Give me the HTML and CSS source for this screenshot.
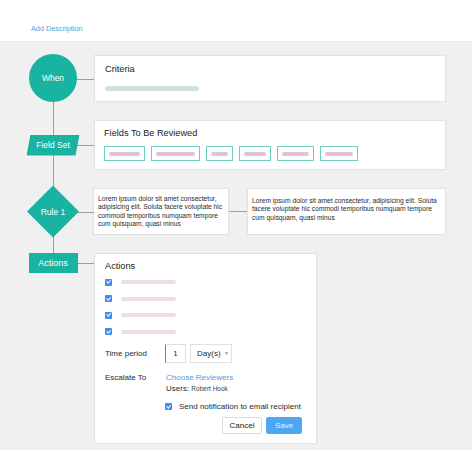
FILE: index.html
```html
<!doctype html>
<html>
<head>
<meta charset="utf-8">
<title>Workflow rule</title>
<link rel="stylesheet" href="styles.css">
</head>
<body>

  <div class="top">
    <a class="add-desc">Add Description</a>
  </div>

  <div class="canvas">
    <div class="flow">

      <div class="row">
        <div class="node"><div class="shape circle">When</div></div>
        <div class="card criteria">
          <div class="card-title">Criteria</div>
          <div class="bar grey"></div>
        </div>
      </div>

      <div class="row">
        <div class="node"><div class="shape para">Field Set</div></div>
        <div class="card fields">
          <div class="card-title">Fields To Be Reviewed</div>
          <div class="chips">
            <div class="chip" style="width:41px"><span></span></div>
            <div class="chip" style="width:49px"><span></span></div>
            <div class="chip" style="width:27px"><span></span></div>
            <div class="chip" style="width:32px"><span></span></div>
            <div class="chip" style="width:37px"><span></span></div>
            <div class="chip" style="width:38px"><span></span></div>
          </div>
        </div>
      </div>

      <div class="row">
        <div class="node"><div class="shape diamond">Rule 1</div></div>
        <div class="rule-boxes">
          <div class="card note narrow">Lorem ipsum dolor sit amet consectetur, adipisicing elit. Soluta facere voluptate hic commodi temporibus numquam tempore cum quisquam, quasi minus</div>
          <div class="link"></div>
          <div class="card note wide">Lorem ipsum dolor sit amet consectetur, adipisicing elit. Soluta facere voluptate hic commodi temporibus numquam tempore cum quisquam, quasi minus</div>
        </div>
      </div>

      <div class="row last">
        <div class="node"><div class="shape rect">Actions</div></div>
        <div class="card actions">
          <div class="card-title">Actions</div>
          <div class="check-row"><span class="check"></span><span class="bar pink"></span></div>
          <div class="check-row"><span class="check"></span><span class="bar pink"></span></div>
          <div class="check-row"><span class="check"></span><span class="bar pink"></span></div>
          <div class="check-row"><span class="check"></span><span class="bar pink"></span></div>

          <div class="field period">
            <div class="label">Time period</div>
            <div class="controls inline">
              <div class="input num">1</div>
              <div class="input select">Day(s) <span class="caret">&#9662;</span></div>
            </div>
          </div>

          <div class="field escalate">
            <div class="label">Escalate To</div>
            <div class="controls">
              <a class="link-text">Choose Reviewers</a>
              <div class="users">Users: <small>Robert Hook</small></div>
            </div>
          </div>

          <div class="field notify">
            <div class="label"></div>
            <div class="controls inline">
              <span class="check"></span>
              <span class="nowrap">Send notification to email recipient</span>
            </div>
          </div>

          <div class="buttons">
            <button class="btn">Cancel</button>
            <button class="btn primary">Save</button>
          </div>
        </div>
      </div>

    </div>
  </div>

</body>
</html>
```

FILE: styles.css
```css
html, body { margin:0; padding:0; background:#fff; }

body {
  font-family: "Liberation Sans", Arial, sans-serif;
  color:#2a2a2a;
  width:474px;
}

.top {
  height:41px;
  box-sizing:border-box;
  padding:17px 0 0 31px;
}

.add-desc {
  font-size:7.3px;
  line-height:10px;
  color:#4aa3df;
}

.canvas {
  width:472px;
  height:409px;
  box-sizing:border-box;
  background:#f0f0f0;
  border-top:1px solid #ebebeb;
  padding-top:13px;
}

.flow {
  position:relative;
  width:446px;
  display:flex;
  flex-direction:column;
  gap:18px;
}

/* the spine joining the nodes */
.flow::before {
  content:"";
  position:absolute;
  left:53px;
  top:23px;
  height:175px;
  width:1px;
  background:#9d9d9d;
}

.row {
  display:flex;
  align-items:center;
}

.row.last { align-items:flex-start; }

.node {
  position:relative;
  flex:none;
  width:94px;
  align-self:stretch;
  display:flex;
  align-items:center;
  justify-content:center;
  padding-left:12px;
  box-sizing:border-box;
}

.row.last .node {
  align-self:flex-start;
  height:20px;
}

.node::before {
  content:"";
  position:absolute;
  left:53px;
  right:0;
  top:50%;
  height:1px;
  background:#9d9d9d;
}

.shape {
  position:relative;
  z-index:1;
  display:flex;
  align-items:center;
  justify-content:center;
  background:#18b3a1;
  color:#fff;
  font-size:8.5px;
}

.circle {
  width:48px;
  height:48px;
  margin:-1px 0 0;
  border-radius:50%;
}

.para {
  width:53px;
  height:21px;
  clip-path:polygon(4px 0, 100% 0, calc(100% - 4px) 100%, 0 100%);
}

.diamond {
  width:52px;
  height:52px;
  margin:-3px 0;
  clip-path:polygon(50% 0, 100% 50%, 50% 100%, 0 50%);
}

.rect {
  width:49px;
  height:20px;
  font-size:9px;
}

.card {
  background:#fff;
  border:1px solid #e2e2e2;
  box-shadow:0 0 1px rgba(0,0,0,.05);
  box-sizing:border-box;
}

.criteria, .fields { flex:1; }

.card-title {
  font-size:9.2px;
  line-height:12px;
  color:#222;
}

.criteria { padding:7px 10px 10px; }

.bar {
  display:block;
  height:5px;
  border-radius:3px;
}

.bar.grey {
  width:94px;
  margin-top:11px;
  background:#cfe1df;
}

.fields { padding:6px 9px 8px; }

.chips {
  display:flex;
  gap:6px;
  margin-top:7px;
}

.chip {
  height:15px;
  box-sizing:border-box;
  border:1.5px solid #6ed0c2;
  display:flex;
  align-items:center;
  padding:0 4px;
}

.chip span {
  flex:1;
  height:4px;
  border-radius:2px;
  background:#dfc5d1;
}

.rule-boxes {
  flex:1;
  display:flex;
  align-items:stretch;
  margin-left:-1px;
}

.rule-boxes .link {
  width:18px;
  height:1px;
  align-self:center;
  background:#9d9d9d;
}

.note {
  height:47px;
  padding:6px 4px 0;
  font-size:6.7px;
  line-height:8.4px;
}

.note.narrow { width:136px; flex:none; }
.note.wide { flex:1; padding-top:8px; }

.actions {
  width:223px;
  padding:6px 14px 9px 10px;
}

.actions .card-title { margin-bottom:2px; }

.check-row {
  height:16.5px;
  display:flex;
  align-items:center;
  gap:9px;
}

.check {
  position:relative;
  flex:none;
  width:7px;
  height:7px;
  border-radius:1px;
  background:#3f8fe2;
}

.check::after {
  content:"";
  position:absolute;
  left:2.3px;
  top:0.6px;
  width:1.6px;
  height:3.4px;
  border:solid #fff;
  border-width:0 1px 1px 0;
  transform:rotate(40deg);
}

.bar.pink {
  width:55px;
  height:4px;
  background:#ebdfdf;
}

.field {
  display:grid;
  grid-template-columns:60px 1fr;
  font-size:8px;
  line-height:11px;
}

.period { margin-top:4px; align-items:center; }
.escalate { margin-top:9px; }
.notify { margin-top:7px; }

.controls.inline {
  display:flex;
  align-items:center;
  gap:4px;
}

.notify .controls.inline { gap:7px; }

.nowrap { white-space:nowrap; }

.input {
  height:19px;
  box-sizing:border-box;
  border:1px solid #e0e0e0;
  display:flex;
  align-items:center;
  font-size:8px;
  background:#fff;
}

.input.num {
  width:21px;
  justify-content:center;
  border-left:1.5px solid #e0555a;
}

.input.select {
  width:42px;
  padding-left:6px;
  gap:4px;
}

.caret {
  font-size:6px;
  color:#999;
}

.escalate .controls { padding-left:1px; }

.link-text {
  display:block;
  color:#4a9fe0;
}

.users small {
  font-size:6.5px;
  color:#444;
}

.buttons {
  display:flex;
  justify-content:flex-end;
  gap:4px;
  margin-top:5px;
}

.btn {
  height:17px;
  padding:0;
  font:8px "Liberation Sans", Arial, sans-serif;
  border:1px solid #dcdcdc;
  border-radius:2px;
  background:#fff;
  color:#222;
  width:40px;
}

.btn.primary {
  width:36px;
  background:#4aa8f5;
  border-color:#4aa8f5;
  color:#e6f3ff;
}
```
